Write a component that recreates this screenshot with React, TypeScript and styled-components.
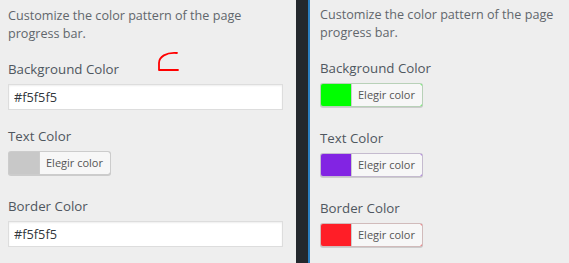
import React from "react";
import styled, { createGlobalStyle } from "styled-components";

const GlobalStyle = createGlobalStyle`
  html, body { margin: 0; padding: 0; background: #eeeeee; }
  body { font-family: "Open Sans", "Noto Sans", sans-serif; }
  * { box-sizing: border-box; }
`;

const Page = styled.div`
  display: flex;
  width: 569px;
  height: 263px;
  overflow: hidden;
  background: #eeeeee;
`;

const Panel = styled.section<{ $top: number; $left: number; $right: number; $width?: number }>`
  position: relative;
  display: flex;
  flex-direction: column;
  ${(p) => (p.$width ? `width: ${p.$width}px; flex: none;` : "flex: 1;")}
  padding: ${(p) => p.$top}px ${(p) => p.$right}px 0 ${(p) => p.$left}px;
  background: #eeeeee;
`;

const Divider = styled.div`
  flex: none;
  width: 14px;
  margin-left: 1px;
  background: #23282d;
  border-right: 2px solid #2a7fc1;
`;

const Description = styled.p`
  margin: 0;
  font-size: 12.6px;
  line-height: 18px;
  color: #61666c;
`;

const Control = styled.div`
  display: flex;
  flex-direction: column;
  align-items: flex-start;
  gap: 5px;
  margin-top: 16px;
`;

const Label = styled.span`
  display: block;
  font-size: 13.3px;
  line-height: 20px;
  color: #4f5760;
`;

const TextInput = styled.input`
  width: 100%;
  height: 26px;
  margin: 0;
  padding: 0 5px;
  border: 1px solid #dddddd;
  background: #ffffff;
  box-shadow: inset 0 1px 2px rgba(0, 0, 0, 0.07);
  font-family: "Open Sans", "Noto Sans", sans-serif;
  font-size: 12.75px;
  color: #32373c;
  outline: none;
`;

const ColorButton = styled.button<{ $swatch: string }>`
  display: flex;
  align-items: stretch;
  height: 24px;
  width: 103px;
  margin: 0 0 5px;
  padding: 0 0 0 30px;
  border: 1px solid rgba(204, 204, 204, 0.9);
  border-radius: 3px;
  background-color: ${(p) => p.$swatch};
  box-shadow: 0 1px 0 #cccccc;
  cursor: pointer;
  overflow: hidden;
`;

const ButtonText = styled.span`
  flex: 1;
  display: block;
  padding: 0 6px;
  border-left: 1px solid #cccccc;
  border-radius: 0 2px 2px 0;
  background: #f7f7f7;
  font-family: "Open Sans", "Noto Sans", sans-serif;
  font-size: 11px;
  line-height: 22px;
  color: #555555;
  text-align: left;
  white-space: nowrap;
`;

const Mark = styled.svg`
  position: absolute;
  left: 150px;
  top: 46px;
  width: 36px;
  height: 30px;
  pointer-events: none;
`;

type Field = { label: string; kind: "text" | "color"; value: string };

const leftFields: Field[] = [
  { label: "Background Color", kind: "text", value: "#f5f5f5" },
  { label: "Text Color", kind: "color", value: "#c8c8c8" },
  { label: "Border Color", kind: "text", value: "#f5f5f5" },
];

const rightFields: Field[] = [
  { label: "Background Color", kind: "color", value: "#00ff00" },
  { label: "Text Color", kind: "color", value: "#8224e3" },
  { label: "Border Color", kind: "color", value: "#ff1e27" },
];

function Controls({ fields }: { fields: Field[] }) {
  return (
    <>
      {fields.map((f) => (
        <Control key={f.label}>
          <Label>{f.label}</Label>
          {f.kind === "text" ? (
            <TextInput defaultValue={f.value} readOnly />
          ) : (
            <ColorButton type="button" $swatch={f.value}>
              <ButtonText>Elegir color</ButtonText>
            </ColorButton>
          )}
        </Control>
      ))}
    </>
  );
}

export default function App() {
  return (
    <>
      <GlobalStyle />
      <Page>
        <Panel $width={295} $top={7} $left={8} $right={12}>
          <Description>
            Customize the color pattern of the page
            <br />
            progress bar.
          </Description>
          <Controls fields={leftFields} />
          <Mark viewBox="0 0 36 30">
            <path
              d="M27 7 C16 6 9 11 9 17 L9 24 L28 24"
              fill="none"
              stroke="#ff0000"
              strokeWidth="1.8"
              strokeLinecap="round"
              strokeLinejoin="round"
            />
          </Mark>
        </Panel>
        <Divider />
        <Panel $top={6} $left={10} $right={8}>
          <Description>
            Customize the color pattern of the page
            <br />
            progress bar.
          </Description>
          <Controls fields={rightFields} />
        </Panel>
      </Page>
    </>
  );
}
